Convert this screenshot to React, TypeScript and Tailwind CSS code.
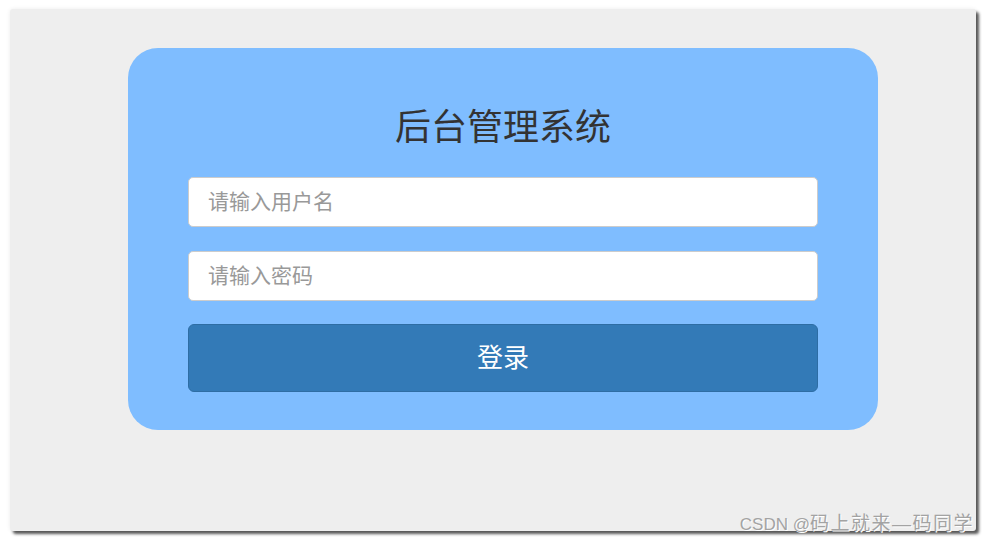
export default function App() {
  return (
    <div
      className="relative h-[542px] w-[988px] bg-white pl-[10px] pt-[9px]"
      style={{ fontFamily: '"Liberation Sans", "Noto Sans CJK SC", sans-serif' }}
    >
      {/* framed page area */}
      <div className="h-[522px] w-[966px] rounded-[3px] bg-[#eeeeee] pl-[118px] pt-[39px] shadow-[3px_3px_3px_rgba(0,0,0,0.65),0_0_4px_rgba(0,0,0,0.08)]">
        {/* login card */}
        <div className="flex w-[750px] flex-col rounded-[30px] bg-[#7fbdff] px-[60px] pb-[38px] pt-[60px]">
          <h1 className="h-[40px] text-center text-[36px] leading-[40px] text-[#333333]">
            后台管理系统
          </h1>
          <input
            type="text"
            placeholder="请输入用户名"
            className="mt-[29px] h-[50px] w-full rounded-[5px] border border-[#cccccc] bg-white px-[19px] text-[21px] text-[#333] outline-none placeholder:text-[#999999]"
          />
          <input
            type="password"
            placeholder="请输入密码"
            className="mt-[24px] h-[50px] w-full rounded-[5px] border border-[#cccccc] bg-white px-[19px] text-[21px] text-[#333] outline-none placeholder:text-[#999999]"
          />
          <button
            type="button"
            className="mt-[23px] h-[68px] w-full rounded-[6px] border border-[#2e6da4] bg-[#337ab7] text-[26px] text-white"
          >
            登录
          </button>
        </div>
      </div>
      {/* watermark */}
      <div className="absolute bottom-[6px] right-[14px] flex items-baseline leading-[22px] text-[#a3a3a3] [text-shadow:1px_1px_0_#ffffff]">
        <span className="text-[17px]">CSDN @</span>
        <span className="text-[19px] tracking-[1.5px]">码上就来—码同学</span>
      </div>
    </div>
  );
}
